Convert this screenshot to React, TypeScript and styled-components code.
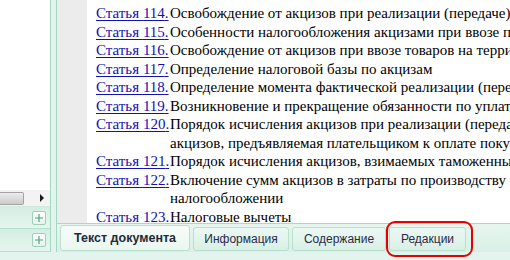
import styled, { createGlobalStyle } from 'styled-components';

const GlobalStyle = createGlobalStyle`
  html, body {
    margin: 0;
    padding: 0;
    background: #e2f4ed;
    overflow: hidden;
  }
`;

const Page = styled.div`
  width: 510px;
  height: 260px;
  display: flex;
  align-items: flex-start;
  gap: 5px;
  background: #e2f4ed;
`;

const LeftPanel = styled.div`
  width: 50px;
  height: 252px;
  border-right: 1px solid #a3d9c3;
  display: flex;
  flex-direction: column;
  flex-shrink: 0;
`;

const Tree = styled.div`
  height: 190px;
  background: #fff;
`;

const HScroll = styled.div`
  height: 16px;
  background: #f3f3f3;
  display: flex;
  align-items: center;
  border-bottom: 1px solid #cfe9dd;
`;

const Thumb = styled.div`
  width: 24px;
  height: 13px;
  box-sizing: border-box;
  border: 1px solid #a3a3a3;
  border-left: none;
  border-radius: 0 2px 2px 0;
  background: linear-gradient(#ececec, #cacaca);
`;

const ArrowRight = styled.div`
  margin-left: 16px;
  width: 0;
  height: 0;
  border-top: 4px solid transparent;
  border-bottom: 4px solid transparent;
  border-left: 4px solid #1a1a1a;
`;

const GroupRow = styled.div<{ $h: number }>`
  height: ${({ $h }) => $h}px;
  display: flex;
  align-items: center;
  justify-content: flex-end;
  padding-right: 4px;
  background: linear-gradient(#d3eee2, #e7f6ef);
  border-bottom: 1px solid #b7e0cf;
`;

const PlusButton = styled.div`
  width: 14px;
  height: 14px;
  box-sizing: border-box;
  border: 1px solid #9fcfb9;
  border-radius: 2px;
  background: linear-gradient(#fbfefd, #e4f4ed);
  display: flex;
  align-items: center;
  justify-content: center;
`;

const MainPanel = styled.div`
  flex: 1;
  height: 252px;
  border-left: 1px solid #a3d9c3;
  display: flex;
  flex-direction: column;
  min-width: 0;
`;

const Content = styled.div`
  height: 223px;
  display: flex;
  overflow: hidden;
  border-bottom: 1px solid #a9d9c4;
`;

const Gutter = styled.div`
  width: 30px;
  background: #ececec;
  flex-shrink: 0;
`;

const Doc = styled.div`
  flex: 1;
  background: #fff;
  padding: 4px 0 0 9px;
  overflow: hidden;
  font-family: 'Liberation Serif', 'Times New Roman', serif;
  font-size: 15px;
  line-height: 18.5px;
  color: #000;
`;

const Article = styled.div`
  display: grid;
  grid-template-columns: 74px max-content;
  white-space: nowrap;
`;

const ArticleLink = styled.a`
  color: #1010b8;
  text-decoration: underline;
  text-underline-offset: 2px;
`;

const TabBar = styled.div`
  flex: 1;
  display: flex;
  align-items: flex-start;
  padding: 1px 0 0 3px;
  gap: 3px;
  background: linear-gradient(#e6f6ef, #d9f0e6);
`;

const Tab = styled.div<{ $active?: boolean; $w: number; $top: number }>`
  position: relative;
  width: ${({ $w }) => $w}px;
  height: ${({ $active }) => ($active ? 26 : 24)}px;
  margin-top: ${({ $top }) => $top}px;
  box-sizing: border-box;
  border: 1px solid #b9dfcd;
  border-radius: 3px;
  background: ${({ $active }) =>
    $active ? 'linear-gradient(#f7fcfa, #eaf7f1)' : 'linear-gradient(#ecf8f3, #d9f0e6)'};
  display: flex;
  align-items: center;
  justify-content: center;
  font-family: 'Liberation Sans', Tahoma, Arial, sans-serif;
  font-size: ${({ $active }) => ($active ? 12.5 : 12)}px;
  font-weight: ${({ $active }) => ($active ? 700 : 400)};
  color: ${({ $active }) => ($active ? '#1e2a3a' : '#2a2a48')};
  white-space: nowrap;
`;

const Highlight = styled.div`
  position: absolute;
  top: -7px;
  left: -4px;
  right: -8px;
  bottom: -7px;
  border: 2.5px solid #e60000;
  border-radius: 9px;
  pointer-events: none;
`;

const articles: { n: number; lines: string[] }[] = [
  { n: 114, lines: ['Освобождение от акцизов при реализации (передаче) подакцизных товаров за пределы'] },
  { n: 115, lines: ['Особенности налогообложения акцизами при ввозе подакцизных товаров'] },
  { n: 116, lines: ['Освобождение от акцизов при ввозе товаров на территорию Республики Беларусь'] },
  { n: 117, lines: ['Определение налоговой базы по акцизам'] },
  { n: 118, lines: ['Определение момента фактической реализации (передачи) подакцизных товаров'] },
  { n: 119, lines: ['Возникновение и прекращение обязанности по уплате акцизов'] },
  {
    n: 120,
    lines: [
      'Порядок исчисления акцизов при реализации (передаче) подакцизных товаров. Сумма',
      'акцизов, предъявляемая плательщиком к оплате покупателю',
    ],
  },
  { n: 121, lines: ['Порядок исчисления акцизов, взимаемых таможенными органами'] },
  {
    n: 122,
    lines: [
      'Включение сумм акцизов в затраты по производству и реализации товаров при',
      'налогообложении',
    ],
  },
  { n: 123, lines: ['Налоговые вычеты'] },
];

const tabs = [
  { label: 'Текст документа', w: 130, active: true },
  { label: 'Информация', w: 96 },
  { label: 'Содержание', w: 94 },
  { label: 'Редакции', w: 77, marked: true },
];

function Plus() {
  return (
    <PlusButton>
      <svg width="10" height="10" viewBox="0 0 10 10">
        <path d="M5 1v8M1 5h8" stroke="#5c9f82" strokeWidth="1.2" />
      </svg>
    </PlusButton>
  );
}

export default function App() {
  return (
    <>
      <GlobalStyle />
      <Page>
        <LeftPanel>
          <Tree />
          <HScroll>
            <Thumb />
            <ArrowRight />
          </HScroll>
          <GroupRow $h={21}>
            <Plus />
          </GroupRow>
          <GroupRow $h={22}>
            <Plus />
          </GroupRow>
        </LeftPanel>
        <MainPanel>
          <Content>
            <Gutter />
            <Doc>
              {articles.map(a => (
                <Article key={a.n}>
                  <ArticleLink href="#">Статья {a.n}.</ArticleLink>
                  <div>
                    {a.lines.map((l, i) => (
                      <div key={i}>{l}</div>
                    ))}
                  </div>
                </Article>
              ))}
            </Doc>
          </Content>
          <TabBar>
            {tabs.map(t => (
              <Tab key={t.label} $active={t.active} $w={t.w} $top={t.active ? 0 : 2}>
                {t.label}
                {t.marked && <Highlight />}
              </Tab>
            ))}
          </TabBar>
        </MainPanel>
      </Page>
    </>
  );
}
